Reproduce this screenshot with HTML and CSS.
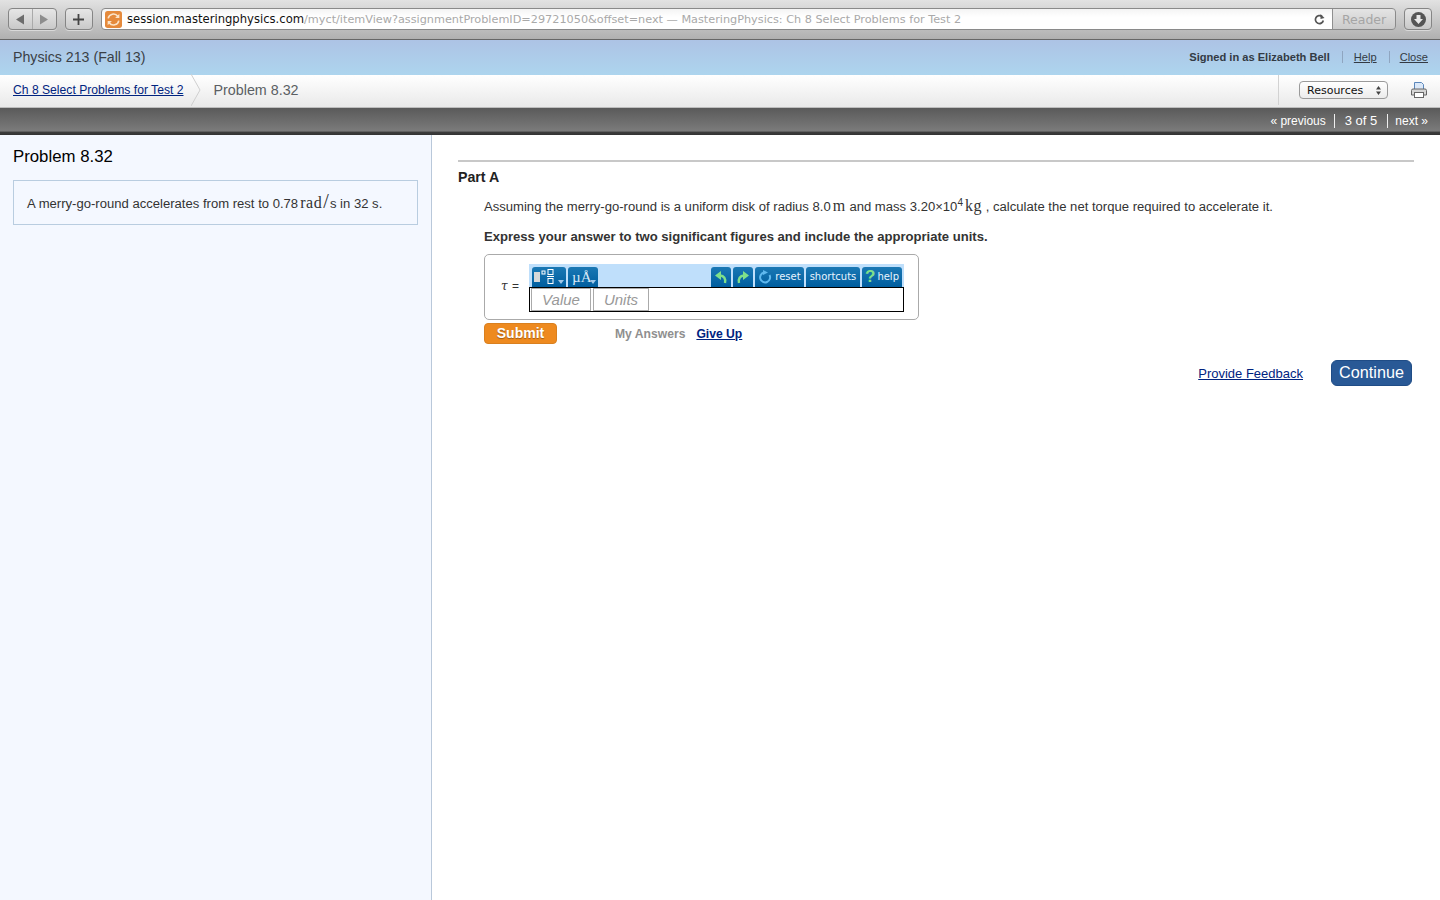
FILE: index.html
```html
<!DOCTYPE html>
<html lang="en">
<head>
<meta charset="utf-8">
<title>MasteringPhysics: Ch 8 Select Problems for Test 2</title>
<link rel="stylesheet" href="styles.css">
</head>
<body>
<div class="chrome">
  <div class="btn-group nav-btns">
    <span class="nav-cell"><svg width="10" height="11" viewBox="0 0 10 11"><path d="M9 .5v10L1 5.500z" fill="#6d6d6d"/></svg></span>
    <span class="nav-cell nav-right"><svg width="10" height="11" viewBox="0 0 10 11"><path d="M1 .5v10l8-5z" fill="#8d8d8d"/></svg></span>
  </div>
  <div class="btn-group plus-btn"><svg width="11" height="11" viewBox="0 0 11 11"><path d="M5.500 0v11M0 5.500h11" stroke="#444" stroke-width="1.800"/></svg></div>
  <div class="url-bar">
    <svg class="favicon" width="17" height="17" viewBox="0 0 16 16"><rect width="16" height="16" rx="2.500" fill="#e58a3c"/><path d="M3 7a5 5 0 0 1 9-2M13 9a5 5 0 0 1-9 2" fill="none" stroke="#fbe3c8" stroke-width="1.500"/><path d="M13.500 2.500v4h-4zM2.500 13.500v-4h4z" fill="#fbe3c8"/></svg>
    <span class="url"><span class="url-host">session.masteringphysics.com</span>/myct/itemView?assignmentProblemID=29721050&amp;offset=next — MasteringPhysics: Ch 8 Select Problems for Test 2</span>
    <svg class="reload" width="11" height="11" viewBox="0 0 11 11"><path d="M9.300 6.500A4 4 0 1 1 8 2.500" fill="none" stroke="#555" stroke-width="1.700"/><path d="M6.500 0v5l4-1z" fill="#555"/></svg>
    <span class="reader">Reader</span>
  </div>
  <div class="btn-group dl-btn"><svg width="15" height="15" viewBox="0 0 15 15"><circle cx="7.500" cy="7.500" r="7.500" fill="#555"/><path d="M5.500 3h4v4h2.500l-4.500 5L3 7h2.500z" fill="#e8e8e8"/></svg></div>
</div>

<header class="course-bar">
  <span class="course-name">Physics 213 (Fall 13)</span>
  <div class="user-links">
    <strong class="signed">Signed in as Elizabeth Bell</strong>
    <a class="user-link" href="#">Help</a>
    <a class="user-link" href="#">Close</a>
  </div>
</header>

<nav class="crumb-bar">
  <a class="crumb-link" href="#">Ch 8 Select Problems for Test 2</a>
  <svg class="crumb-arrow" width="10" height="32" viewBox="0 0 10 32"><path d="M0 0l9 16L0 32" fill="none" stroke="#cfcfcf"/></svg>
  <span class="crumb-current">Problem 8.32</span>
  <div class="crumb-tools">
    <span class="resources">Resources<svg width="5" height="9" viewBox="0 0 5 9"><path d="M2.500 0L5 3.500H0zM2.500 9L0 5.500h5z" fill="#444"/></svg></span>
    <svg class="printer" width="16" height="16" viewBox="0 0 16 16"><path d="M3.500 7V.5h7l2 2V7" fill="#dbe8f8" stroke="#5b87bb"/><path d="M.5 13V8.500q0-1.500 1.500-1.500h12q1.500 0 1.500 1.500V13z" fill="#d5d5d5" stroke="#666"/><rect x="3.500" y="10.500" width="9" height="5" fill="#fff" stroke="#666"/></svg>
  </div>
</nav>

<div class="pager">
  <a class="pager-item" href="#">« previous</a>
  <span class="pager-item pager-count">3 of 5</span>
  <a class="pager-item" href="#">next »</a>
</div>

<main class="layout">
  <aside class="sidebar">
    <h1 class="side-title">Problem 8.32</h1>
    <p class="side-box">A merry-go-round accelerates from rest to 0.78<span class="math">rad</span><span class="math-slash">/</span>s in 32 s.</p>
  </aside>
  <section class="content">
    <h2 class="part-title">Part A</h2>
    <div class="part-body">
      <p class="question">Assuming the merry-go-round is a uniform disk of radius 8.0<span class="math">m</span> and mass 3.20×10<sup class="sup">4</sup><span class="math">kg</span> , calculate the net torque required to accelerate it.</p>
      <p class="instruction">Express your answer to two significant figures and include the appropriate units.</p>
      <div class="answer-box">
        <span class="tau"><i class="tau-sym">τ</i> =</span>
        <div class="editor">
          <div class="toolbar">
            <span class="tool tool-tpl">
              <svg width="26" height="18" viewBox="0 0 26 18"><rect x="1" y="4" width="6" height="10" fill="#d8d8d8"/><rect x="9" y="3" width="3" height="3" fill="none" stroke="#fff"/><rect x="15" y="1.500" width="5" height="5" fill="none" stroke="#fff"/><path d="M14 8.500h7" stroke="#fff"/><rect x="15" y="10.500" width="5" height="5" fill="none" stroke="#fff"/></svg><i class="caret"></i>
            </span>
            <span class="tool tool-unit"><span class="mu">µÅ</span><i class="caret"></i></span>
            <span class="spacer"></span>
            <span class="tool tool-ico"><svg width="14" height="14" viewBox="0 0 14 14"><path d="M11 13c1-4-1-7.500-5-7.500" fill="none" stroke="#7fe08a" stroke-width="2.400"/><path d="M7 1L1 5.500 7 10z" fill="#7fe08a"/></svg></span>
            <span class="tool tool-ico"><svg width="14" height="14" viewBox="0 0 14 14"><path d="M3 13c-1-4 1-7.500 5-7.500" fill="none" stroke="#7fe08a" stroke-width="2.400"/><path d="M7 1l6 4.500L7 10z" fill="#7fe08a"/></svg></span>
            <span class="tool tool-reset"><svg width="14" height="14" viewBox="0 0 14 14"><path d="M6 2.500A5 5 0 1 0 11.500 5" fill="none" stroke="#5fb8ee" stroke-width="2"/><path d="M5 0l5 2.500L5 5z" fill="#5fb8ee"/></svg>reset</span>
            <span class="tool tool-text">shortcuts</span>
            <span class="tool tool-help"><b class="qmark">?</b>help</span>
          </div>
          <div class="fields">
            <span class="field field-value">Value</span>
            <span class="field field-units">Units</span>
          </div>
        </div>
      </div>
      <div class="actions">
        <button class="submit" type="button">Submit</button>
        <span class="my-answers">My Answers</span>
        <a class="give-up" href="#">Give Up</a>
      </div>
    </div>
    <div class="footer-row">
      <a class="feedback" href="#">Provide Feedback</a>
      <button class="continue" type="button">Continue</button>
    </div>
  </section>
</main>
</body>
</html>
```
FILE: styles.css
```css
* { box-sizing: border-box; }
html, body { height: 100%; }
body {
  margin: 0;
  height: 900px;
  overflow: hidden;
  display: flex;
  flex-direction: column;
  font-family: "Liberation Sans", Arial, sans-serif;
  color: #333;
  background: #fff;
}
a { color: #00237f; }

/* Browser chrome */
.chrome {
  height: 40px;
  flex: none;
  display: flex;
  align-items: center;
  padding: 0 8px 1px;
  background: linear-gradient(#e2e2e2, #b0b0b0);
  border-bottom: 1px solid #666;
}
.btn-group {
  height: 22px;
  display: flex;
  align-items: center;
  justify-content: center;
  border: 1px solid #858585;
  border-radius: 4px;
  background: linear-gradient(#e6e6e6, #c9c9c9);
  box-shadow: 0 1px 0 rgba(255,255,255,.45);
}
.nav-btns { width: 49px; }
.nav-cell { flex: 1; height: 100%; display: flex; align-items: center; justify-content: center; }
.nav-right { border-left: 1px solid #aaa; }
.plus-btn { width: 28px; margin-left: 8px; }
.url-bar {
  width: 1296px;
  height: 22px;
  margin-left: 8px;
  display: flex;
  align-items: center;
  padding-left: 3px;
  border: 1px solid #8a8a8a;
  border-radius: 4px;
  background: linear-gradient(#f4f4f4, #fff 40%);
  overflow: hidden;
}
.favicon { flex: none; }
.url {
  margin-left: 5px;
  flex: 1;
  font: 11.25px/22px "DejaVu Sans", sans-serif;
  color: #a9a9a9;
  white-space: nowrap;
  overflow: hidden;
}
.url-host { color: #111; font-size: 11.6px; }
.reload { flex: none; margin-right: 7px; }
.reader {
  flex: none;
  width: 64px;
  height: 22px;
  margin-right: -1px;
  text-align: center;
  font: 12.5px/21px "DejaVu Sans", sans-serif;
  color: #a5a5a5;
  background: linear-gradient(#e4e4e4, #cbcbcb);
  border: 1px solid #8f8f8f;
  border-radius: 0 4px 4px 0;
}
.dl-btn { width: 28px; margin-left: 8px; }

/* Course header */
.course-bar {
  height: 35px;
  flex: none;
  display: flex;
  align-items: center;
  justify-content: space-between;
  padding: 0 12px 2px 13px;
  background: linear-gradient(#adc3e5, #add5ee);
}
.course-name { font-size: 14.2px; color: #3a3f46; }
.user-links { display: flex; align-items: center; font-size: 11.1px; color: #333a44; }
.signed { padding-right: 12px; }
.user-link {
  color: #333a44;
  padding-left: 11px;
  margin-right: 12px;
  border-left: 1px solid #8fa5c0;
  line-height: 12px;
}
.user-link:last-child { margin-right: 0; padding-left: 10px; }

/* Breadcrumb */
.crumb-bar {
  height: 33px;
  flex: none;
  display: flex;
  align-items: center;
  padding: 0 0 2px 13px;
  background: linear-gradient(#fff, #e9e9e9);
  border-bottom: 1px solid #bdbdbd;
}
.crumb-link { font-size: 12.15px; }
.crumb-arrow { margin-left: 7px; flex: none; }
.crumb-current { margin-left: 13px; font-size: 14.3px; color: #5b5f63; }
.crumb-tools {
  margin-left: auto;
  width: 162px;
  height: 100%;
  display: flex;
  align-items: center;
  padding-left: 20px;
  border-left: 1px solid #d2d2d2;
}
.resources {
  width: 89px;
  height: 18px;
  display: flex;
  align-items: center;
  justify-content: space-between;
  padding: 1px 6px 0 7px;
  font: 11px/16px "DejaVu Sans", sans-serif;
  color: #111;
  background: linear-gradient(#fff, #ececec);
  border: 1px solid #9a9a9a;
  border-radius: 4px;
}
.printer { margin-left: 23px; flex: none; }

/* Pager */
.pager {
  height: 27px;
  flex: none;
  display: flex;
  align-items: center;
  justify-content: flex-end;
  padding-right: 12px;
  background: linear-gradient(#5a5a5a, #7b7b7b 85%, #3c3c3c 90%, #333);
  padding-bottom: 2px;
}
.pager-item {
  font-size: 12px;
  line-height: 14px;
  color: #fff;
  text-decoration: none;
}
.pager-count {
  margin: 0 7px 0 8px;
  padding: 0 10px;
  font-size: 13px;
  border-left: 1px solid #eee;
  border-right: 1px solid #eee;
}

/* Main layout */
.layout { flex: 1; display: flex; min-height: 0; }
.sidebar {
  width: 432px;
  flex: none;
  padding: 0 13px;
  background: #f4f8ff;
  border-right: 1px solid #b9c8da;
}
.side-title {
  margin: 13px 0 14px;
  font-size: 16.8px;
  line-height: 18px;
  font-weight: normal;
  color: #000;
}
.side-box {
  width: 405px;
  height: 45px;
  margin: 0;
  padding-left: 13px;
  border: 1px solid #b9cde0;
  font-size: 13.08px;
  line-height: 41px;
  white-space: nowrap;
}
.math {
  font-family: "Liberation Serif", serif;
  font-size: 16px;
  margin-left: 2px;
  letter-spacing: .6px;
}
.math-slash { font-family: "Liberation Serif", serif; font-size: 20px; padding: 0 1px; }
.content { flex: 1; padding: 25px 26px 0; min-width: 0; }
.part-title {
  margin: 0;
  padding-top: 7px;
  border-top: 2px solid #c8c8c8;
  font-size: 14.2px;
  line-height: 17px;
  color: #222;
}
.part-body { padding-left: 26px; }
.question {
  margin: 11px 0 0;
  font-size: 13.08px;
  line-height: 18px;
  white-space: nowrap;
}
.sup { font-size: 10px; line-height: 0; }
.instruction {
  margin: 12px 0 0;
  font-size: 13.08px;
  line-height: 18px;
  font-weight: bold;
  color: #333;
}
.answer-box {
  width: 435px;
  height: 66px;
  margin-top: 8px;
  display: flex;
  align-items: center;
  padding: 2px 0 0 16px;
  border: 1px solid #aaa;
  border-radius: 5px;
}
.tau { width: 28px; flex: none; padding-bottom: 4px; font: 12px "Liberation Sans", sans-serif; }
.tau-sym { font: italic 12px "DejaVu Serif", serif; padding-right: 1px; }
.editor { width: 375px; flex: none; }
.toolbar {
  height: 23px;
  display: flex;
  align-items: flex-end;
  gap: 2px;
  padding: 0 2px 0 3px;
  background: #bfdffb;
}
.tool {
  height: 20px;
  display: flex;
  align-items: center;
  justify-content: center;
  position: relative;
  font: 10px/20px "DejaVu Sans", sans-serif;
  color: #e8f4ff;
  background: linear-gradient(#1a78b4, #005e9f);
  border-radius: 3px 3px 0 0;
}
.spacer { flex: 1; }
.tool-tpl { width: 34px; justify-content: flex-start; padding-left: 1px; }
.tool-unit { width: 30px; justify-content: flex-start; padding-left: 4px; }
.mu { font: 15px/20px "Liberation Serif", serif; color: #d7e8f6; }
.caret {
  position: absolute;
  right: 2px;
  bottom: 3px;
  border: 3px solid transparent;
  border-top: 4px solid #9fc7e8;
  border-bottom: 0;
}
.tool-ico { width: 20px; }
.tool-reset { width: 49px; gap: 3px; }
.tool-text { width: 54px; }
.tool-help { width: 40px; gap: 2px; }
.qmark { font: bold 17px/20px "Liberation Sans", sans-serif; color: #7fe08a; }
.fields {
  height: 25px;
  display: flex;
  gap: 2px;
  padding-left: 1px;
  border: 1px solid #000;
  background: #fff;
}
.field {
  height: 23px;
  text-align: center;
  font-size: 15px;
  line-height: 21px;
  font-style: italic;
  color: #999;
  border: 1px solid #aaa;
}
.field-value { width: 60px; }
.field-units { width: 56px; }
.actions {
  margin-top: 3px;
  display: flex;
  align-items: center;
  font-size: 12.15px;
  font-weight: bold;
}
.submit {
  width: 73px;
  height: 21px;
  padding: 0;
  font: bold 14px/19px "Liberation Sans", sans-serif;
  color: #fff;
  text-shadow: 0 1px 1px rgba(0,0,0,.35);
  background: #ee8a1f;
  border: 1px solid #d9801f;
  border-radius: 4px;
}
.my-answers { margin-left: 58px; color: #8f8f8f; }
.give-up { margin-left: 11px; }
.footer-row {
  margin-top: 16px;
  padding-right: 2px;
  display: flex;
  align-items: center;
  justify-content: flex-end;
}
.feedback { font-size: 13px; }
.continue {
  width: 81px;
  height: 26px;
  margin-left: 28px;
  padding: 0 0 2px;
  font: 16.2px/22px "Liberation Sans", sans-serif;
  color: #fff;
  background: #295996;
  border: 1px solid #1f4c86;
  border-radius: 6px;
}
```
